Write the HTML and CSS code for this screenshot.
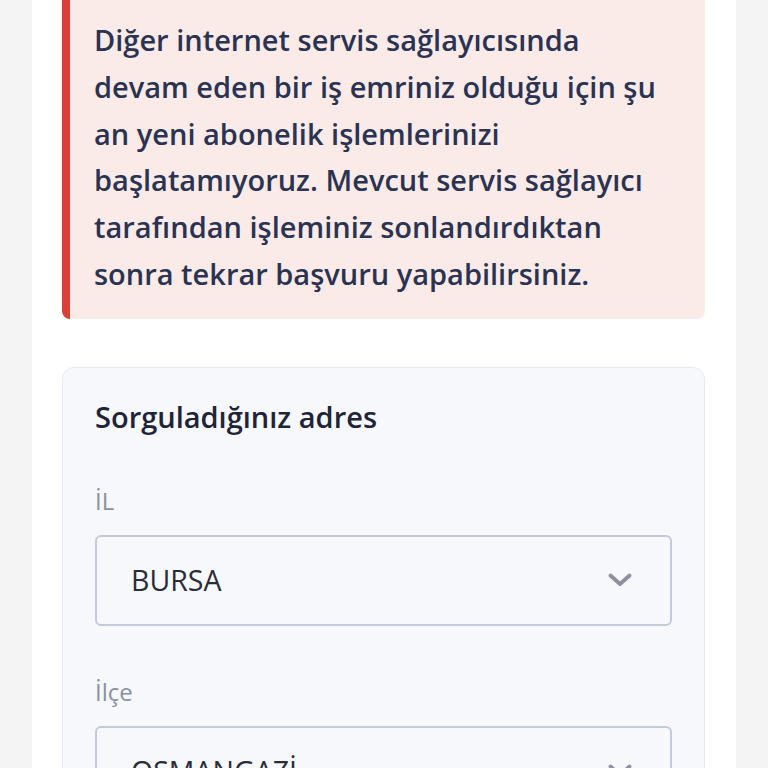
FILE: index.html
```html
<!DOCTYPE html>
<html lang="tr">
<head>
<meta charset="utf-8">
<link rel="stylesheet" href="styles.css">
</head>
<body>
<div class="panel">
  <div class="alert">
    <p>Diğer internet servis sağlayıcısında devam eden bir iş emriniz olduğu için şu an yeni abonelik işlemlerinizi başlatamıyoruz. Mevcut servis sağlayıcı tarafından işleminiz sonlandırdıktan sonra tekrar başvuru yapabilirsiniz.</p>
  </div>
  <div class="card">
    <h2 class="card-title">Sorguladığınız adres</h2>
    <div class="fields">
      <div class="field">
        <div class="label">İL</div>
        <div class="select">
          <span class="value">BURSA</span>
          <svg class="chev" width="24" height="14" viewBox="0 0 24 14"><path d="M2.5 2.5 L12 11 L21.5 2.5" fill="none" stroke="#8d90a0" stroke-width="3.8" stroke-linecap="round" stroke-linejoin="round"/></svg>
        </div>
      </div>
      <div class="field">
        <div class="label">İlçe</div>
        <div class="select">
          <span class="value">OSMANGAZİ</span>
          <svg class="chev" width="24" height="14" viewBox="0 0 24 14"><path d="M2.5 2.5 L12 11 L21.5 2.5" fill="none" stroke="#8d90a0" stroke-width="3.8" stroke-linecap="round" stroke-linejoin="round"/></svg>
        </div>
      </div>
    </div>
  </div>
</div>
</body>
</html>
```

FILE: styles.css
```css
html, body {
  margin: 0;
  padding: 0;
  background: #f4f4f5;
  font-family: "Open Sans", "Noto Sans", sans-serif;
  height: 768px;
  overflow: hidden;
}

.panel {
  margin: 0 32px;
  padding: 0 31px 0 30px;
  background: #ffffff;
  min-height: 1200px;
  display: flex;
  flex-direction: column;
  gap: 48px;
}

.alert {
  margin-top: -5px;
  background: #fbebe8;
  border-left: 8px solid #dc3f35;
  border-radius: 0 0 8px 8px;
  padding: 22px 24px 21px 24px;
}

.alert p {
  margin: 0;
  font-size: 29px;
  line-height: 46.8px;
  font-weight: 600;
  color: #2b3352;
}

.card {
  background: #f6f8fb;
  border: 1px solid #e6eaf0;
  border-radius: 12px;
  padding: 29px 32px 40px 32px;
  display: flex;
  flex-direction: column;
  gap: 48px;
}

.card-title {
  margin: 0;
  font-size: 29px;
  line-height: 40px;
  font-weight: 600;
  color: #1f2438;
}

.fields {
  display: flex;
  flex-direction: column;
  gap: 50px;
}

.field {
  display: flex;
  flex-direction: column;
  gap: 18px;
}

.label {
  font-size: 24px;
  line-height: 32px;
  color: #8b90a3;
}

.select {
  height: 87px;
  border: 2px solid #c4cadb;
  border-radius: 6px;
  background: #f6f8fb;
  display: flex;
  align-items: center;
  justify-content: space-between;
  padding: 0 38px 0 34px;
}

.value {
  font-size: 28.5px;
  color: #2a2d38;
}

.chev {
  display: block;
}
```
